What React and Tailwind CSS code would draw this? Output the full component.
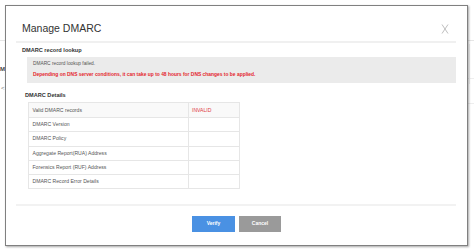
import React from "react";

const rows = [
  { label: "Valid DMARC records", value: "INVALID" },
  { label: "DMARC Version", value: "" },
  { label: "DMARC Policy", value: "" },
  { label: "Aggregate Report(RUA) Address", value: "" },
  { label: "Forensics Report (RUF) Address", value: "" },
  { label: "DMARC Record Error Details", value: "" },
];

export default function App() {
  return (
    <div className="relative w-[474px] h-[252px] bg-white overflow-hidden font-['Liberation_Sans',Arial,sans-serif]">
      {/* faint background page remnants */}
      <div className="absolute left-0 top-[40px] w-[6px] h-[1px] bg-[#e6e6e6]" />
      <div className="absolute left-0 top-[66px] text-[6px] leading-none font-bold text-[#444]">M</div>
      <div className="absolute left-[1px] top-[85px] text-[6px] leading-none text-[#777]">&lt;</div>
      <div className="absolute right-0 top-[40px] w-[8px] h-[1px] bg-[#e6e6e6]" />
      <div className="absolute right-[4px] top-[44px] w-[1px] h-[40px] bg-[#eeeeee]" />
      <div className="absolute right-0 top-[78px] w-[8px] h-[1px] bg-[#eeeeee]" />
      <div className="absolute right-0 top-[103px] w-[8px] h-[1px] bg-[#eeeeee]" />

      {/* modal */}
      <div className="absolute left-[5px] top-[5px] w-[463px] h-[241px] bg-white border border-[#808080] shadow-[1px_1px_2px_rgba(0,0,0,0.35)] flex flex-col">
        {/* header */}
        <div className="relative pl-[16px] pt-[17px]">
          <div className="h-[11px] text-[10.5px] leading-none text-[#333]">Manage DMARC</div>
          <svg
            className="absolute left-[435px] top-[18px]"
            width="8"
            height="10"
            viewBox="0 0 8 10"
          >
            <path d="M1 0.5 L7 9.5 M7 0.5 L1 9.5" stroke="#b8b8b8" strokeWidth="0.9" fill="none" />
          </svg>
        </div>
        <div className="mt-[7px] ml-[10px] mr-[11px] h-[2px] bg-[#f0f0f0]" />

        {/* record lookup */}
        <div className="mt-[5px] pl-[16px] h-[6px] text-[5.6px] leading-none font-bold text-[#333]">
          DMARC record lookup
        </div>
        <div className="mt-[3px] ml-[21px] mr-[11px] h-[26px] bg-[#ebebeb] pl-[6px] pt-[4.5px]">
          <div className="h-[5px] text-[4.8px] leading-none text-[#555]">DMARC record lookup failed.</div>
          <div className="mt-[6px] text-[4.92px] leading-none font-bold text-[#e4262d] whitespace-nowrap">
            Depending on DNS server conditions, it can take up to 48 hours for DNS changes to be applied.
          </div>
        </div>

        {/* details */}
        <div className="mt-[9.5px] pl-[19px] h-[6px] text-[5.6px] leading-none font-bold text-[#333]">
          DMARC Details
        </div>
        <div className="mt-[3.5px] ml-[22px] w-[212px] border border-[#e6e6e6] flex flex-col">
          {rows.map((r, i) => (
            <div
              key={r.label}
              className={
                i === 0
                  ? "flex h-[14.2px] bg-[#f9f9f9]"
                  : "flex h-[14.2px] border-t border-[#e6e6e6]"
              }
            >
              <div className="w-[160px] border-r border-[#e6e6e6] pl-[3.5px] flex items-center text-[5.1px] leading-none text-[#555] whitespace-nowrap">
                {r.label}
              </div>
              <div className="flex-1 pl-[3px] flex items-center text-[5.1px] leading-none text-[#e0393e]">
                {r.value}
              </div>
            </div>
          ))}
        </div>

        {/* footer */}
        <div className="mt-[15px] ml-[10px] mr-[11px] h-[1.5px] bg-[#f2f2f2]" />
        <div className="mt-[10px] flex justify-center gap-[4px]">
          <button className="w-[43px] h-[16px] bg-[#4a91e3] text-white text-[5px] font-bold leading-none flex items-center justify-center">
            Verify
          </button>
          <button className="w-[42px] h-[16px] bg-[#9a9a9a] text-white text-[5px] font-bold leading-none flex items-center justify-center">
            Cancel
          </button>
        </div>
      </div>
    </div>
  );
}
